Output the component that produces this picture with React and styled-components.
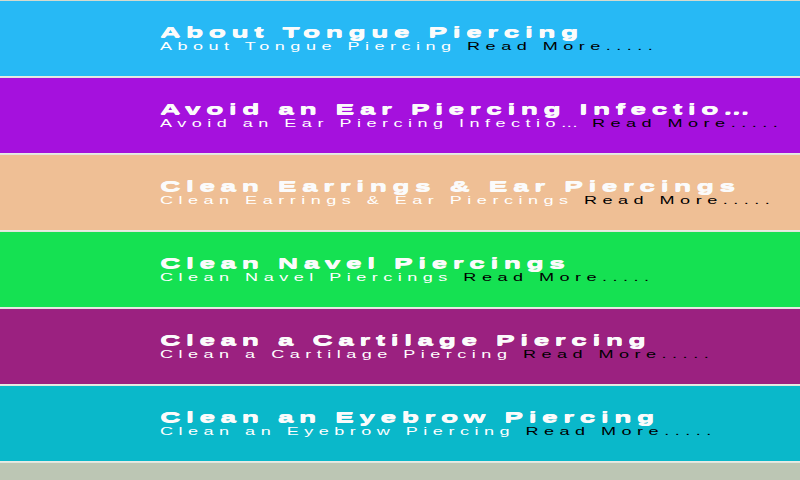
import React from "react";
import styled, { createGlobalStyle } from "styled-components";

const articles = [
  { title: "About Tongue Piercing", color: "#27b9f5" },
  { title: "Avoid an Ear Piercing Infectio", cut: true, color: "#a511dd" },
  { title: "Clean Earrings & Ear Piercings", color: "#efbf95" },
  { title: "Clean Navel Piercings", color: "#15e152" },
  { title: "Clean a Cartilage Piercing", color: "#9b2180" },
  { title: "Clean an Eyebrow Piercing", color: "#0ab8ca" },
  { title: "", color: "#bcc6b4" },
];

const Heading = ({ item }) => (
  <>
    {item.title}
    {item.cut && <Dots>...</Dots>}
  </>
);

const App = () => {
  return (
    <>
      <GlobalStyle />
      <ArticleList>
        {articles.map((item, i) => (
          <ArticleRow key={i} $bg={item.color}>
            {item.title && (
              <>
                <Title>
                  <Heading item={item} />
                </Title>
                <Summary>
                  <Heading item={item} /> <ReadMore>Read More.....</ReadMore>
                </Summary>
              </>
            )}
          </ArticleRow>
        ))}
      </ArticleList>
    </>
  );
};

const GlobalStyle = createGlobalStyle`
  html, body {
    margin: 0;
    padding: 0;
    height: 480px;
    overflow: hidden;
    background: #bcc6b4;
  }
  body {
    font-family: "Liberation Sans", Arial, sans-serif;
  }
`;

const ArticleList = styled.div`
  display: flex;
  flex-direction: column;
  width: 800px;
`;

const ArticleRow = styled.div`
  display: flex;
  flex-direction: column;
  box-sizing: content-box;
  height: 51px;
  padding: 24px 0 0 160px;
  background-color: ${(p) => p.$bg};
  border-top: 1px solid rgba(255, 255, 255, 0.55);
  border-bottom: 1px solid rgba(255, 255, 255, 0.65);
  background-clip: padding-box;
  overflow: hidden;
  &:first-child {
    border-top-color: rgba(255, 255, 255, 0.35);
  }
`;

const Title = styled.div`
  font-size: 14px;
  line-height: 14px;
  font-weight: bold;
  letter-spacing: 2.8px;
  color: #fbfbfb;
  white-space: nowrap;
  text-shadow: 0.35px 0 0 currentColor, 0 0.5px 0 currentColor;
  transform: scaleX(2);
  transform-origin: left center;
`;

const Summary = styled.div`
  margin-top: 1px;
  font-size: 11px;
  line-height: 12px;
  letter-spacing: 3.35px;
  color: #ffffff;
  white-space: nowrap;
  transform: scaleX(1.64);
  transform-origin: left center;
`;

const Dots = styled.span`
  letter-spacing: 0.4px;
  padding-right: 2px;
`;

const ReadMore = styled.span`
  color: #000000;
`;

export default App;
